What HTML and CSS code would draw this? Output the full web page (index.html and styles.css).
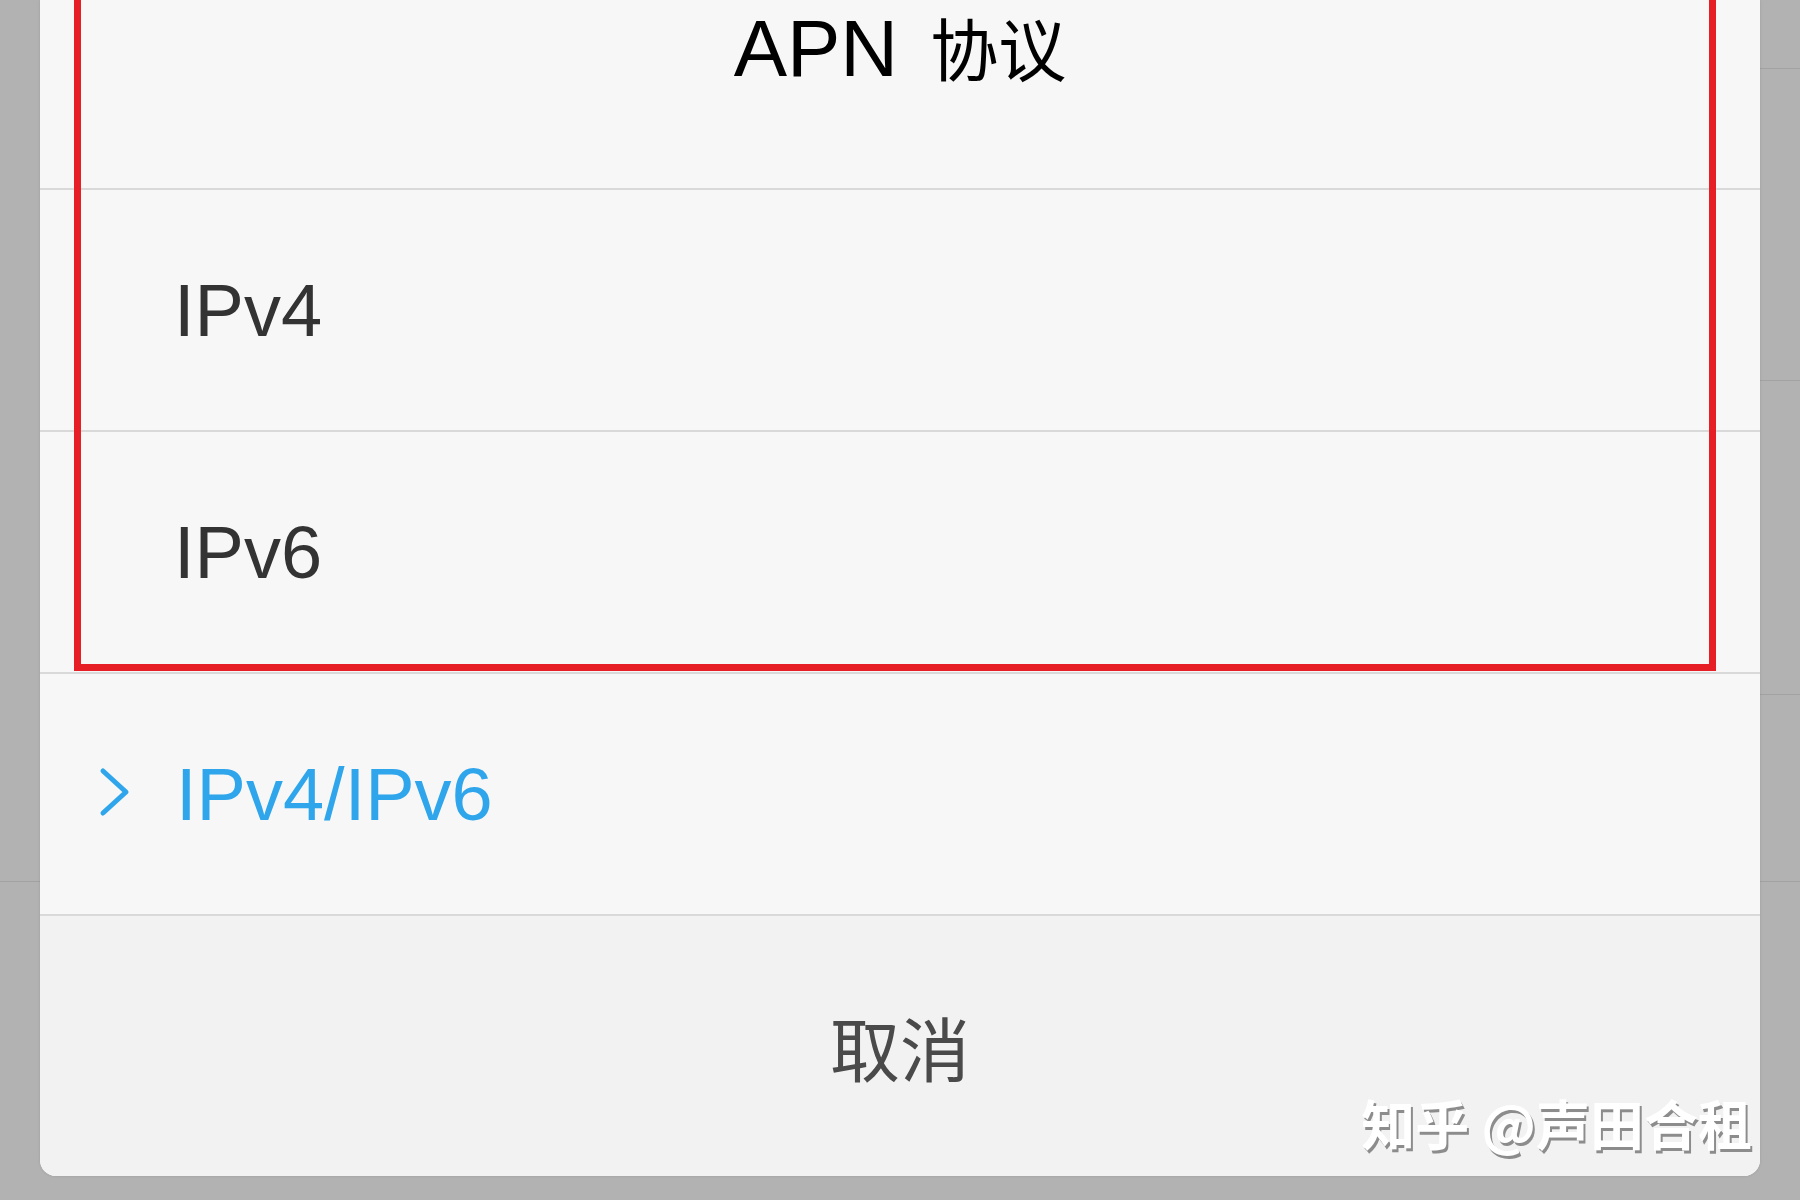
FILE: index.html
```html
<!DOCTYPE html>
<html lang="zh-CN">
<head>
  <meta charset="UTF-8">
  <title>APN 协议</title>
  <link rel="stylesheet" href="styles.css">
</head>
<body>
  <div class="side side-left">
    <div class="bg-row" style="height:881px"></div>
  </div>

  <div class="dialog">
    <div class="title">APN <span class="zh">协议</span></div>
    <div class="option">IPv4</div>
    <div class="option">IPv6</div>
    <div class="option selected">
      <svg class="chevron" width="34" height="50" viewBox="0 0 34 50">
        <polyline points="5,2 28,23 5,44" fill="none" stroke="#2fa5ec" stroke-width="5" stroke-linecap="round" stroke-linejoin="round"/>
      </svg>
      <span>IPv4/IPv6</span>
    </div>
    <div class="cancel">取消</div>

    <div class="mark"></div>
    <div class="watermark">知乎 @声田合租</div>
  </div>

  <div class="side side-right">
    <div class="bg-row" style="height:68px"></div>
    <div class="bg-row" style="height:311px"></div>
    <div class="bg-row" style="height:313px"></div>
    <div class="bg-row" style="height:186px"></div>
  </div>
</body>
</html>
```

FILE: styles.css
```css
body { margin: 0; height: 1200px; overflow: hidden; display: flex; background: #b2b2b2; font-family: "Liberation Sans", "Noto Sans CJK SC", sans-serif; }

.side { width: 40px; flex: none; }
.bg-row { border-bottom: 1px solid #a2a2a2; }

.dialog { position: relative; width: 1720px; height: 1176px; flex: none; display: flex; flex-direction: column; background: #f7f7f7; border-radius: 0 0 16px 16px; box-shadow: 0 0 3px rgba(0,0,0,0.12); }

.title { height: 181px; padding-top: 7px; border-bottom: 2px solid #d9d9d9; text-align: center; font-size: 80px; line-height: 80px; color: #000; }
.title .zh { margin-left: 10px; font-size: 68px; font-family: "Noto Sans CJK SC", sans-serif; }

.option { height: 240px; border-bottom: 2px solid #d9d9d9; display: flex; align-items: center; padding-left: 134px; font-size: 74px; color: #333; }
.option.selected { padding-left: 58px; color: #2fa5ec; }
.chevron { overflow: visible; margin-right: 44px; }

.cancel { flex: 1; display: flex; align-items: center; justify-content: center; background: #f2f2f2; border-radius: 0 0 16px 16px; font-family: "Noto Sans CJK SC", sans-serif; font-size: 70px; color: #4a4a4a; }

/* annotation drawn on top of the screenshot */
.mark { position: absolute; left: 34px; top: -20px; width: 1628px; height: 677px; border: 7px solid #e61e25; pointer-events: none; }

.watermark { position: absolute; right: 8px; bottom: 26px; font-family: "Noto Sans CJK SC", sans-serif; font-weight: bold; font-size: 54px; line-height: 1; color: #fff; text-shadow: 2px 3px 0 #8c8c8c; }
```
